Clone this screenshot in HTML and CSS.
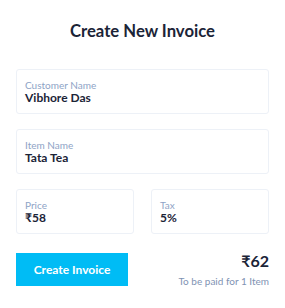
FILE: index.html
```html
<!DOCTYPE html>
<html>
<head>
<meta charset="utf-8">
<link rel="stylesheet" href="styles.css">
</head>
<body>
<div class="page">
  <h1 class="title">Create New Invoice</h1>
  <div class="field">
    <div class="label">Customer Name</div>
    <div class="value">Vibhore Das</div>
  </div>
  <div class="field">
    <div class="label">Item Name</div>
    <div class="value">Tata Tea</div>
  </div>
  <div class="row">
    <div class="field">
      <div class="label">Price</div>
      <div class="value">₹58</div>
    </div>
    <div class="field">
      <div class="label">Tax</div>
      <div class="value">5%</div>
    </div>
  </div>
  <div class="footer">
    <button class="btn">Create Invoice</button>
    <div class="total">
      <div class="amount">₹62</div>
      <div class="note">To be paid for 1 Item</div>
    </div>
  </div>
</div>
</body>
</html>
```
FILE: styles.css
```css
html, body {
  margin: 0;
  padding: 0;
  background: #ffffff;
}
.page {
  font-family: Lato, "Noto Sans", sans-serif;
  padding: 21px 16px 0 16px;
  display: flex;
  flex-direction: column;
  gap: 15px;
}
.title {
  margin: 0 0 13px 0;
  text-align: center;
  font-size: 16.7px;
  font-weight: 700;
  color: #1b2437;
  line-height: 20px;
}
.field {
  border: 1px solid #edf1f7;
  border-radius: 3px;
  height: 45px;
  box-sizing: border-box;
  padding: 9px 8px 0 8px;
}
.label {
  font-size: 10px;
  line-height: 12px;
  color: #8ea3c6;
}
.value {
  font-size: 12px;
  line-height: 14px;
  font-weight: 700;
  color: #1b2437;
}
.row {
  display: grid;
  grid-template-columns: 1fr 1fr;
  column-gap: 17px;
}
.footer {
  margin-top: 4px;
  display: flex;
  justify-content: space-between;
  align-items: flex-start;
}
.btn {
  width: 112px;
  height: 33px;
  border: none;
  background: #00bcf5;
  color: #ffffff;
  font-family: Lato, "Noto Sans", sans-serif;
  font-size: 12px;
  font-weight: 700;
  padding: 0;
}
.total {
  text-align: right;
  display: flex;
  flex-direction: column;
}
.amount {
  font-size: 16px;
  line-height: 16px;
  font-weight: 700;
  color: #1b2437;
}
.note {
  margin-top: 6px;
  font-size: 10px;
  line-height: 12px;
  color: #7f93b3;
}
```
